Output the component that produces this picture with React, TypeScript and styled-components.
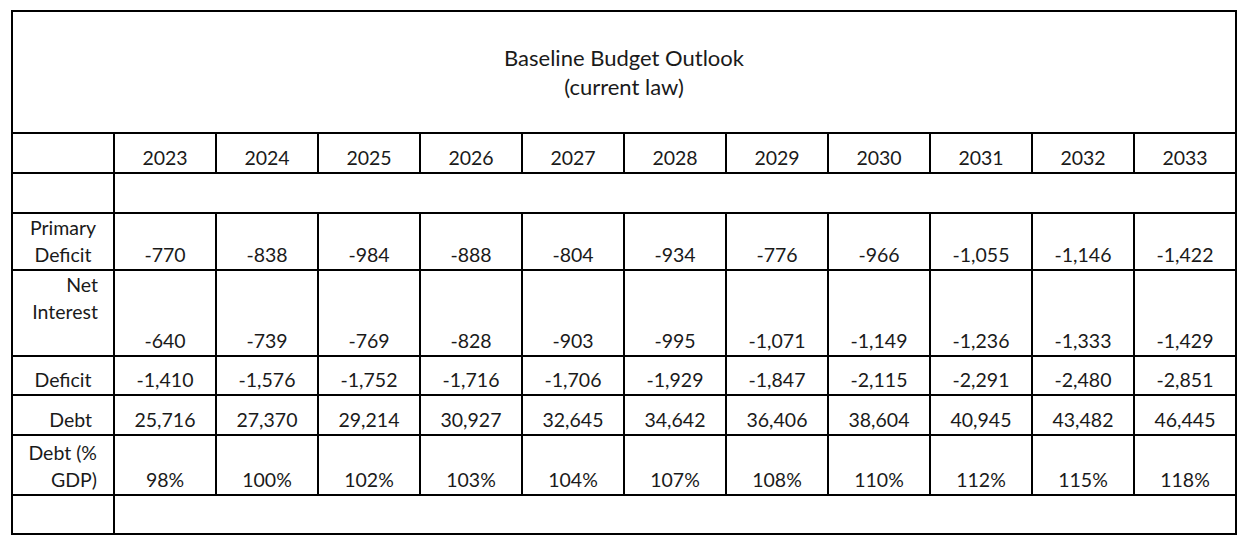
import styled, { createGlobalStyle } from 'styled-components';

const years = [2023, 2024, 2025, 2026, 2027, 2028, 2029, 2030, 2031, 2032, 2033];

type Row = {
  label: string[];
  height: number;
  labelAlign: 'center' | 'right';
  labelPad: number;
  labelTop?: boolean;
  values: string[];
};

const rows: Row[] = [
  {
    label: ['Primary', 'Deficit'],
    height: 55,
    labelAlign: 'center',
    labelPad: 0,
    values: ['-770', '-838', '-984', '-888', '-804', '-934', '-776', '-966', '-1,055', '-1,146', '-1,422'],
  },
  {
    label: ['Net', 'Interest'],
    height: 84,
    labelAlign: 'right',
    labelPad: 15,
    labelTop: true,
    values: ['-640', '-739', '-769', '-828', '-903', '-995', '-1,071', '-1,149', '-1,236', '-1,333', '-1,429'],
  },
  {
    label: ['Deficit'],
    height: 37,
    labelAlign: 'center',
    labelPad: 0,
    values: ['-1,410', '-1,576', '-1,752', '-1,716', '-1,706', '-1,929', '-1,847', '-2,115', '-2,291', '-2,480', '-2,851'],
  },
  {
    label: ['Debt'],
    height: 38,
    labelAlign: 'right',
    labelPad: 21,
    values: ['25,716', '27,370', '29,214', '30,927', '32,645', '34,642', '36,406', '38,604', '40,945', '43,482', '46,445'],
  },
  {
    label: ['Debt (%', 'GDP)'],
    height: 58,
    labelAlign: 'right',
    labelPad: 16,
    values: ['98%', '100%', '102%', '103%', '104%', '107%', '108%', '110%', '112%', '115%', '118%'],
  },
];

export default function App() {
  return (
    <>
      <GlobalStyle />
      <Page>
        <Sheet>
          <Title>
            <div>Baseline Budget Outlook</div>
            <div>(current law)</div>
          </Title>

          <LabelCell $height={38} />
          {years.map((y) => (
            <Cell key={y}>{y}</Cell>
          ))}

          <LabelCell $height={38} />
          <SpanCell />

          {rows.map((r) => (
            <RowGroup key={r.label.join(' ')} row={r} />
          ))}

          <LabelCell $height={37} />
          <SpanCell />
        </Sheet>
      </Page>
    </>
  );
}

const RowGroup = ({ row }: { row: Row }) => (
  <>
    <LabelCell
      $height={row.height}
      $align={row.labelAlign}
      $pad={row.labelPad}
      $top={row.labelTop}
    >
      {row.label.map((l) => (
        <div key={l}>{l}</div>
      ))}
    </LabelCell>
    {row.values.map((v, i) => (
      <Cell key={i}>{v}</Cell>
    ))}
  </>
);

const GlobalStyle = createGlobalStyle`
  html, body {
    margin: 0;
    background: #ffffff;
  }
  body {
    font-family: Lato, "Open Sans", sans-serif;
    color: #1a1a1a;
  }
`;

const Page = styled.div`
  padding: 10px 0 0 11px;
`;

const Sheet = styled.div`
  display: inline-grid;
  grid-template-columns: 100px repeat(11, 100px);
  gap: 2px;
  padding: 2px;
  background: #000000;
  font-size: 19.5px;
  line-height: 27px;
`;

const Title = styled.div`
  grid-column: 1 / -1;
  height: 120px;
  background: #ffffff;
  display: flex;
  flex-direction: column;
  justify-content: center;
  align-items: center;
  font-size: 22px;
  line-height: 29px;
  box-sizing: border-box;
`;

const Cell = styled.div`
  background: #ffffff;
  display: flex;
  align-items: flex-end;
  justify-content: center;
  padding-bottom: 1px;
  box-sizing: border-box;
`;

const SpanCell = styled.div`
  grid-column: 2 / -1;
  background: #ffffff;
`;

const LabelCell = styled.div<{
  $height: number;
  $align?: 'center' | 'right';
  $pad?: number;
  $top?: boolean;
}>`
  height: ${(p) => p.$height}px;
  background: #ffffff;
  display: flex;
  flex-direction: column;
  justify-content: ${(p) => (p.$top ? 'flex-start' : 'flex-end')};
  align-items: ${(p) => (p.$align === 'right' ? 'flex-end' : 'center')};
  padding-right: ${(p) => p.$pad ?? 0}px;
  padding-bottom: ${(p) => (p.$top ? 0 : 1)}px;
  box-sizing: border-box;
`;
